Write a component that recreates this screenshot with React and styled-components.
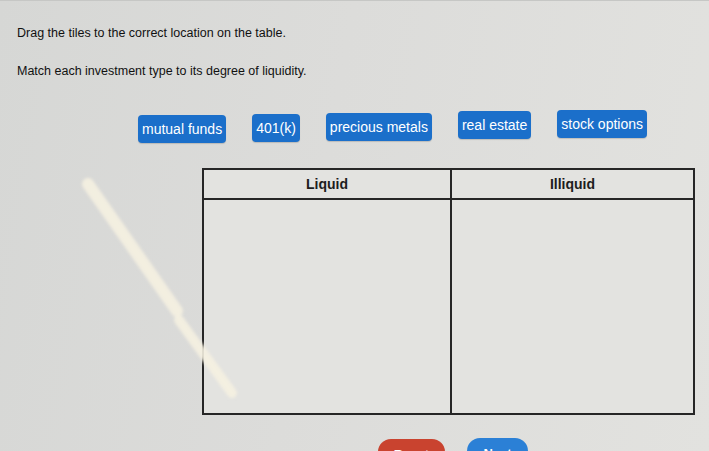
import React from 'react'
import styled, { createGlobalStyle } from 'styled-components';

const Global = createGlobalStyle`
  html, body { margin: 0; padding: 0; }
  body {
    width: 709px;
    height: 451px;
    overflow: hidden;
    font-family: "Liberation Sans", Arial, sans-serif;
    background: linear-gradient(100deg, #d6d7d5 0%, #dcdcda 45%, #e2e2df 100%);
  }
`

const tiles = ['mutual funds', '401(k)', 'precious metals', 'real estate', 'stock options']

const App = () => {
  return (
    <>
      <Global />
      <Page>
        <TopEdge />
        <Prompt>Drag the tiles to the correct location on the table.</Prompt>
        <Prompt second>Match each investment type to its degree of liquidity.</Prompt>
        <TileRow>
          {tiles.map((t, i) => (
            <Tile key={t} lift={i}>{t}</Tile>
          ))}
        </TileRow>
        <Table>
          <HeadRow>
            <HeadCell>Liquid</HeadCell>
            <HeadCell last>Illiquid</HeadCell>
          </HeadRow>
          <BodyRow>
            <DropCell />
            <DropCell last />
          </BodyRow>
        </Table>
        <ButtonRow>
          <ActionButton color="#c9432f" wide>Reset</ActionButton>
          <ActionButton color="#2b80d6">Next</ActionButton>
        </ButtonRow>
        <Glare viewBox="0 0 709 451" width="709" height="451">
          <defs>
            <filter id="soft" x="-20%" y="-20%" width="140%" height="140%">
              <feGaussianBlur stdDeviation="1.6" />
            </filter>
          </defs>
          <g filter="url(#soft)" strokeLinecap="round">
            <line x1="88" y1="184" x2="177" y2="311" stroke="#f6f1e2" strokeWidth="12" opacity="0.9" />
            <line x1="179" y1="320" x2="232" y2="393" stroke="#f6f1e2" strokeWidth="10" opacity="0.9" />
          </g>
        </Glare>
      </Page>
    </>
  )
}

export default App;

const Page = styled.div`
  position: relative;
  width: 709px;
  height: 451px;
  overflow: hidden;
  display: flex;
  flex-direction: column;
`

const TopEdge = styled.div`
  height: 5px;
  background: #cfd0ce;
  border-bottom: 1px solid #c6c7c5;
`

const Prompt = styled.p`
  margin: ${p => p.second ? '22px 0 0 17px' : '24px 0 0 17px'};
  font-size: 12.5px;
  line-height: 16px;
  color: #111;
`

const TileRow = styled.div`
  display: flex;
  align-items: flex-start;
  gap: 26px;
  margin: 32px 0 0 138px;
  height: 32px;
`

const Tile = styled.div`
  margin-top: ${p => 4 - p.lift * 1.25}px;
  height: 28px;
  padding: 0 4px;
  display: flex;
  align-items: center;
  justify-content: center;
  box-sizing: border-box;
  background: #1b6fca;
  color: #fff;
  font-size: 14px;
  border-radius: 4px;
  box-shadow: 0 1px 1px rgba(0, 0, 0, 0.15);
`

const Table = styled.div`
  margin: 25px 0 0 202px;
  width: 493px;
  border: 2px solid #262626;
  box-sizing: border-box;
  background: #e3e3e0;
`

const HeadRow = styled.div`
  display: grid;
  grid-template-columns: 248px 1fr;
  height: 28px;
  border-bottom: 2px solid #262626;
`

const HeadCell = styled.div`
  display: flex;
  align-items: center;
  justify-content: center;
  font-weight: bold;
  font-size: 14px;
  color: #1d1d1d;
  border-right: ${p => p.last ? 'none' : '2px solid #262626'};
`

const BodyRow = styled.div`
  display: grid;
  grid-template-columns: 248px 1fr;
  height: 213px;
`

const DropCell = styled.div`
  border-right: ${p => p.last ? 'none' : '2px solid #262626'};
`

const ButtonRow = styled.div`
  display: flex;
  align-items: flex-start;
  gap: 22px;
  margin: 23px 0 0 378px;
`

const ActionButton = styled.div`
  margin-top: ${p => p.wide ? 1 : 0}px;
  width: ${p => p.wide ? 67 : 61}px;
  height: 30px;
  border-radius: 13px;
  background: ${p => p.color};
  color: #fff;
  font-weight: bold;
  font-size: 13px;
  text-align: center;
  padding-top: 8px;
  box-sizing: border-box;
`

const Glare = styled.svg`
  position: absolute;
  left: 0;
  top: 0;
  pointer-events: none;
`
